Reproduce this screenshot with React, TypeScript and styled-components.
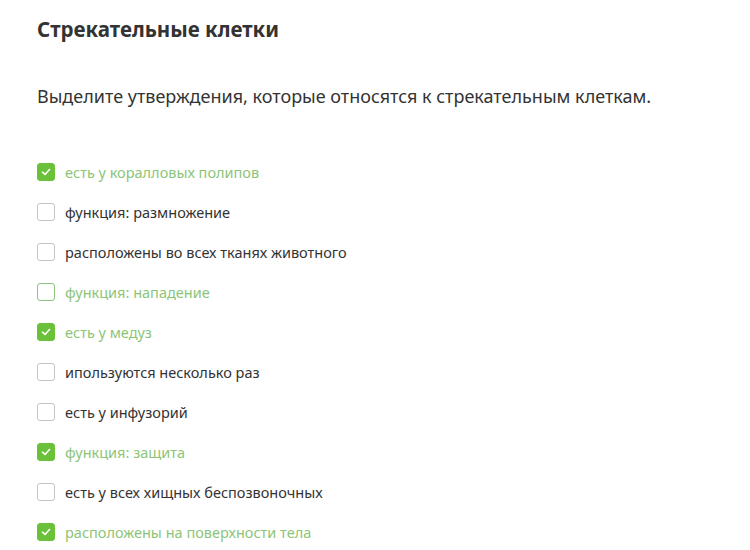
import React from "react";
import styled, { createGlobalStyle } from "styled-components";

const Global = createGlobalStyle`
  html, body { margin: 0; padding: 0; background: #fff; }
  body { font-family: "Noto Sans", "Open Sans", sans-serif; }
`;

const Page = styled.div`
  padding: 14px 37px 0 37px;
  display: flex;
  flex-direction: column;
`;

const Title = styled.h1`
  margin: 0;
  font-size: 20.5px;
  font-weight: 700;
  color: #333;
  line-height: 30px;
`;

const Question = styled.p`
  margin: 38px 0 0 0;
  font-size: 18px;
  color: #333;
  line-height: 28px;
`;

const List = styled.div`
  margin-top: 51px;
  display: flex;
  flex-direction: column;
  gap: 18px;
`;

const Row = styled.label<{ $correct: boolean }>`
  display: flex;
  align-items: center;
  gap: 10px;
  height: 22px;
  font-size: 14.5px;
  color: ${(p) => (p.$correct ? "#8cc579" : "#333")};
`;

const Box = styled.span<{ $checked: boolean; $correct: boolean }>`
  box-sizing: border-box;
  width: 18px;
  height: 18px;
  border-radius: 3px;
  display: flex;
  align-items: center;
  justify-content: center;
  background: ${(p) => (p.$checked ? "#6cc13a" : "#fff")};
  border: 1px solid
    ${(p) => (p.$checked ? "#6cc13a" : p.$correct ? "#8cc579" : "#c4c4c4")};
`;

const items = [
  { t: "есть у коралловых полипов", c: true, k: true },
  { t: "функция: размножение", c: false, k: false },
  { t: "расположены во всех тканях животного", c: false, k: false },
  { t: "функция: нападение", c: false, k: true },
  { t: "есть у медуз", c: true, k: true },
  { t: "ипользуются несколько раз", c: false, k: false },
  { t: "есть у инфузорий", c: false, k: false },
  { t: "функция: защита", c: true, k: true },
  { t: "есть у всех хищных беспозвоночных", c: false, k: false },
  { t: "расположены на поверхности тела", c: true, k: true },
];

export default function App() {
  return (
    <>
      <Global />
      <Page>
        <Title>Стрекательные клетки</Title>
        <Question>Выделите утверждения, которые относятся к стрекательным клеткам.</Question>
        <List>
          {items.map((it) => (
            <Row key={it.t} $correct={it.k}>
              <Box $checked={it.c} $correct={it.k}>
                {it.c && (
                  <svg width="10" height="8" viewBox="0 0 10 8">
                    <path d="M1.5 4.2 L4 6.5 L8.5 1.5" fill="none" stroke="#fff" strokeWidth="1.6" strokeLinecap="round" strokeLinejoin="round" />
                  </svg>
                )}
              </Box>
              {it.t}
            </Row>
          ))}
        </List>
      </Page>
    </>
  );
}
